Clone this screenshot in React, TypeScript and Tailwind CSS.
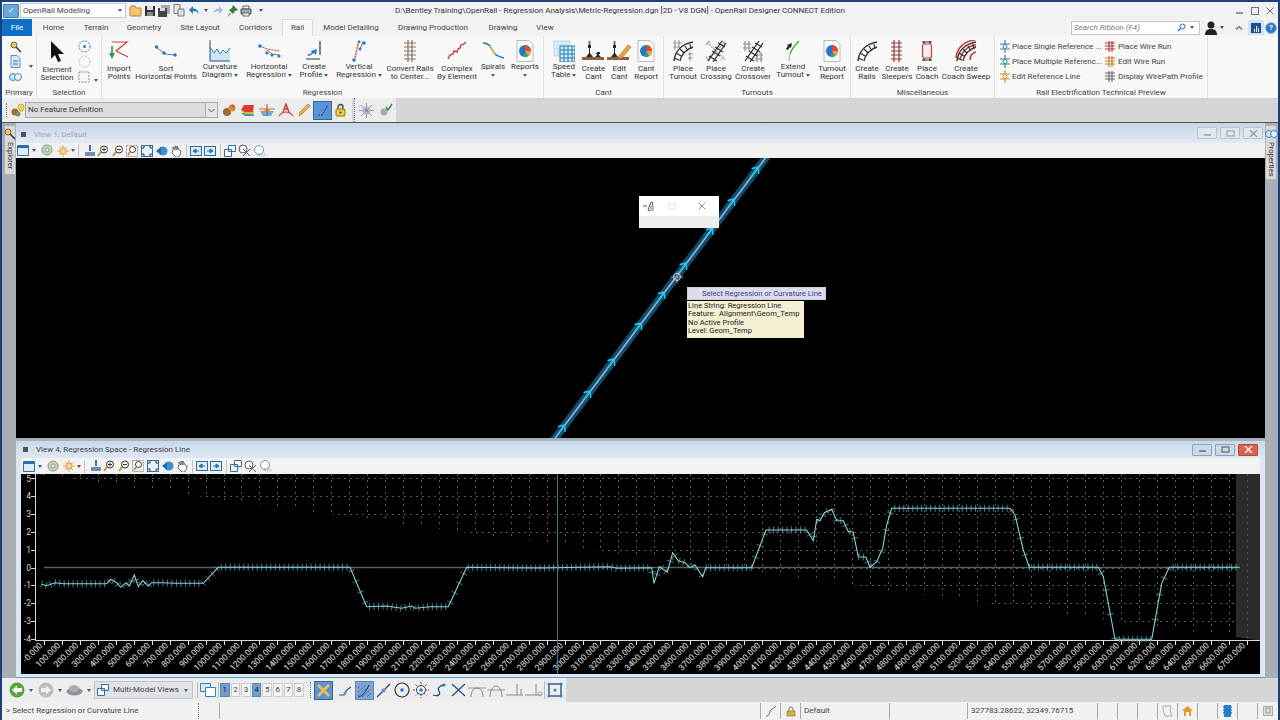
import type { ReactNode } from "react";

// small helpers for drawings
function Svg({ w = 22, h = 22, children }: { w?: number; h?: number; children: ReactNode }) {
  return (
    <svg width={w} height={h} viewBox={`0 0 ${w} ${h}`} fill="none" className="shrink-0">
      {children}
    </svg>
  );
}

function Tri() {
  return <span className="inline-block w-0 h-0 border-x-[2.5px] border-t-[3px] border-x-transparent border-t-[#555]" />;
}

function Report() {
  return (
    <Svg w={18} h={22}>
      <path d="M1 .5h12l4 4v17H1z" fill="#fafafa" stroke="#b9b9b9" />
      <circle cx="9" cy="11" r="6" fill="#1f78c8" />
      <path d="M9 11V5a6 6 0 0 1 6 6z" fill="#e0492c" />
      <path d="M9 11h6a6 6 0 0 1-3 5.2z" fill="#f2a12b" />
      <path d="M9 11l3 5.2a6 6 0 0 1-5 .4z" fill="#2f9d8f" />
    </Svg>
  );
}

function Cant({ pencil }: { pencil?: boolean }) {
  return (
    <Svg w={24} h={20}>
      <path d="M0 16h22v3H0z" fill="#8a6242" />
      <path d="M6 4h3v3H8v5l3 4H4l3-4V7H6z" fill="#2b2b2b" />
      <path d="M7.5 0v4" stroke="#2a7fc0" strokeWidth="2" />
      {!pencil && <path d="M15 11h3v2h-1v1l2 2h-6l2-2v-1h-1z" fill="#2b2b2b" />}
      {pencil && <path d="M12 15l9-11 3 2-9 11-4 1z" fill="#e8a33a" stroke="#8a6242" strokeWidth=".6" />}
    </Svg>
  );
}

function CurvedTrack({ hash, red }: { hash?: boolean; red?: boolean }) {
  const ties = ["M2 15l5 2", "M4 10l5 3", "M8 6l4 4", "M13 3l3 5", "M18 1l1 5"];
  return (
    <Svg>
      {hash && <path d="M1 3h9M1 7h6M3 0v10M7 0v8M16 14h5M16 18h5M18 12v9" stroke="#999" strokeWidth="1.2" />}
      {red && <path d="M1 18C2 8 9 1 20 0M5 20C7 11 12 6 21 5M15 20c0-4 2-7 6-8" stroke="#d2322a" strokeWidth="1.5" />}
      <path d="M2 21C3 11 10 4 21 2M8 21C9 15 14 9 21 7" stroke="#333" strokeWidth="1.4" />
      {ties.map((d) => (
        <path key={d} d={d} transform="translate(0 3)" stroke="#333" strokeWidth="1.2" />
      ))}
    </Svg>
  );
}

function Ladder({ gray }: { gray?: boolean }) {
  return (
    <Svg>
      {gray ? (
        <path d="M1 4h8M1 8h8M3 1v10M7 1v10M13 15h8M13 19h8M15 12v10M19 12v10" stroke="#8f8f8f" strokeWidth="1.2" />
      ) : (
        <path d="M2 2l18 18M20 2L2 20M5 1l-3 3M19 17l-3 3M1 5l3-3M17 1l4 4M1 17l4 4" stroke="#a9a9a9" strokeWidth="1.4" strokeDasharray="2 1" />
      )}
      <path d="M3 21L17 1M8 22L21 3M4 16l8 5M7 11l8 5M10 7l8 5M13 3l7 4" stroke="#333" strokeWidth="1.3" />
    </Svg>
  );
}

const bigIcons: Record<string, ReactNode> = {
  import: (
    <Svg w={20} h={21}>
      <path d="M3 2h15L7 11l12 6" stroke="#c8423c" strokeWidth="1.2" />
      <path d="M3 6v10" stroke="#2aa03c" strokeWidth="1.6" />
      <path d="M0 13l3 6 3-6z" fill="#2aa03c" />
    </Svg>
  ),
  sort: (
    <Svg w={24} h={12}>
      <path d="M2 2l9 7 10 1" stroke="#555" strokeWidth=".8" />
      <circle cx="2.5" cy="2" r="1.8" fill="#1f78c8" />
      <circle cx="10" cy="8" r="1.8" fill="#1f78c8" />
      <circle cx="21" cy="10" r="1.8" fill="#1f78c8" />
    </Svg>
  ),
  curve: (
    <Svg>
      <path d="M1 7l4 6 3-4 3 5 3-4 3 3 4-5v13H1z" fill="#cfe4f6" />
      <path d="M1 7l4 6 3-4 3 5 3-4 3 3 4-5" stroke="#2d8a96" strokeWidth="1" />
      <path d="M1 0v21h20" stroke="#2b4f80" strokeWidth="1" />
    </Svg>
  ),
  hreg: (
    <Svg w={23} h={14}>
      <path d="M2 2l7 3 6 1 6 1" stroke="#c9302c" strokeDasharray="2 1" />
      <path d="M9 6l5 4 7 1" stroke="#555" strokeWidth=".8" />
      <circle cx="2" cy="2" r="1.8" fill="#1f78c8" />
      <circle cx="9" cy="9" r="1.6" fill="#1f78c8" />
      <circle cx="14" cy="11" r="1.6" fill="#1f78c8" />
      <circle cx="21" cy="12" r="1.6" fill="#1f78c8" />
    </Svg>
  ),
  profile: (
    <Svg w={18} h={20}>
      <path d="M15 0v14" stroke="#333" strokeWidth="1.2" />
      <path d="M1 18h14" stroke="#333" />
      <path d="M2 14l5-2-1-2 6-2-1 6-2-2-5 3z" fill="#1f78c8" />
    </Svg>
  ),
  vreg: (
    <Svg w={14} h={22}>
      <path d="M6 4L3 18" stroke="#c9302c" strokeDasharray="2 1" strokeWidth="1.3" />
      <path d="M11 2L8 9" stroke="#444" strokeWidth=".8" />
      <circle cx="7" cy="2" r="1.4" fill="#1f78c8" />
      <circle cx="12" cy="3" r="1.8" fill="#1f78c8" />
      <circle cx="8" cy="9" r="1.5" fill="#1f78c8" />
      <circle cx="2" cy="20" r="1.8" fill="#1f78c8" />
    </Svg>
  ),
  convert: (
    <Svg w={14} h={22}>
      <path d="M5 0v22M9 0v22M1 3h12M1 7h12M1 11h12M1 15h12M1 19h12" stroke="#8b6f5e" strokeWidth="1.2" />
    </Svg>
  ),
  complex: (
    <Svg w={20} h={19}>
      <path d="M1 18l2-4 3-1 1-3 3 1 1-3 2-1 1-3 3-1 2-2" stroke="#c8423c" strokeWidth="1.4" />
    </Svg>
  ),
  spiral: (
    <Svg w={23} h={18}>
      <path d="M1 1c3 0 5 1 7 3" stroke="#1f78c8" strokeWidth="1.5" />
      <path d="M8 4c2 3 3 6 5 8" stroke="#e79a2e" strokeWidth="1.6" />
      <path d="M13 12c2 2 5 3 9 4" stroke="#1f78c8" strokeWidth="1.5" />
    </Svg>
  ),
  report: <Report />,
  speed: (
    <Svg>
      <path d="M1 1h16v15H1z" fill="#e3f0f8" stroke="#bcd6e6" />
      <path d="M5 1v15M9 1v15M13 1v15M1 5h16M1 9h16M1 13h16" stroke="#c5dcea" />
      <path d="M7 6h15v16H7z" fill="#d4e9f7" stroke="#1f7fb5" />
      <path d="M11 6v16M15 6v16M19 6v16M7 10h15M7 14h15M7 18h15" stroke="#1f7fb5" />
    </Svg>
  ),
  cant: <Cant />,
  ecant: <Cant pencil />,
  turnout: <CurvedTrack hash />,
  crossing: <Ladder />,
  crossover: <Ladder gray />,
  extend: (
    <Svg w={16} h={22}>
      <path d="M14 1C9 6 6 11 5 14" stroke="#49b03c" strokeWidth="1.4" />
      <path d="M5 14c-1 3-1 5-1 7" stroke="#bbb" strokeWidth="1.4" />
      <path d="M1 9l2-3-1-1 5-2-1 5-1-1-2 3z" fill="#222" />
    </Svg>
  ),
  rails: <CurvedTrack />,
  sleepers: (
    <Svg w={12} h={22}>
      <path d="M3 0v22M8 0v22" stroke="#c8423c" strokeWidth="1.4" />
      <path d="M0 3h11M0 7h11M0 11h11M0 15h11M0 19h11" stroke="#6a4a44" strokeWidth="1.1" />
    </Svg>
  ),
  coach: (
    <Svg w={12} h={22}>
      <path d="M3 1v3M9 1v3M3 18v3M9 18v3M1 2h10M1 20h10" stroke="#333" strokeWidth="1.2" />
      <rect x="1.5" y="4" width="9" height="14" rx="2" fill="#fbeeee" stroke="#c8423c" strokeWidth="1.2" />
    </Svg>
  ),
  sweep: <CurvedTrack red />,
};

function RibbonItem({ name, lines, width, drop }: { name: string; lines: string[]; width: string; drop?: boolean }) {
  return (
    <div className={`flex flex-col items-center ${width}`}>
      <div className="h-[25px] mt-[2px] flex items-center justify-center">{bigIcons[name]}</div>
      <div className={`text-center leading-[8px] whitespace-nowrap ${drop ? "" : "mt-[2px]"}`}>
        {lines.map((l, i) => (
          <div key={l}>
            {l}
            {drop && i === lines.length - 1 && lines.length > 1 && (
              <span className="ml-[2px] inline-block align-middle">
                <Tri />
              </span>
            )}
          </div>
        ))}
        {drop && lines.length === 1 && (
          <div className="flex justify-center pt-[3px]">
            <Tri />
          </div>
        )}
      </div>
    </div>
  );
}

function Group({ label, width, children }: { label: string; width: string; children: ReactNode }) {
  return (
    <div className={`${width} shrink-0 h-full flex flex-col border-r border-[#dfdfdf]`}>
      <div className="h-[52px] flex">{children}</div>
      <div className="h-[10px] leading-[10px] text-center text-[#444] whitespace-nowrap">{label}</div>
    </div>
  );
}

function Mini({ kind }: { kind: string }) {
  switch (kind) {
    case "tool":
      return (
        <Svg w={12} h={12}>
          <circle cx="4" cy="4" r="3" fill="#e8c66a" stroke="#7a6a30" />
          <path d="M6 6l5 5" stroke="#333" strokeWidth="1.5" />
        </Svg>
      );
    case "doc":
      return (
        <Svg w={11} h={13}>
          <path d="M1 .5h6l3 3v9H1z" fill="#d8e8f6" stroke="#5b8fc0" />
          <path d="M3 6h5M3 9h5" stroke="#2a6fb0" />
        </Svg>
      );
    case "ref":
      return (
        <Svg w={13} h={12}>
          <circle cx="4" cy="6" r="3.5" fill="#cfe4f6" stroke="#3a86c0" />
          <circle cx="9" cy="6" r="3.5" fill="#eaf3fb" stroke="#3a86c0" />
        </Svg>
      );
    case "dotcircle":
      return (
        <Svg w={13} h={13}>
          <circle cx="6.5" cy="6.5" r="5.5" stroke="#3a7fa5" strokeDasharray="2 1.2" />
          <circle cx="6.5" cy="6.5" r="1.5" fill="#3a7fa5" />
        </Svg>
      );
    case "dotgray":
      return (
        <Svg w={13} h={13}>
          <circle cx="6.5" cy="6.5" r="5.5" stroke="#bbb" strokeDasharray="2 1.2" />
        </Svg>
      );
    case "dotrect":
      return (
        <Svg w={12} h={12}>
          <rect x="1" y="1" width="10" height="10" stroke="#888" strokeDasharray="2 1.2" />
        </Svg>
      );
    case "folder":
      return (
        <Svg w={13} h={12}>
          <path d="M1 3l1-2h4l1 2h5v7a1 1 0 0 1-1 1H2a1 1 0 0 1-1-1z" fill="#f2c46d" stroke="#b8873a" />
        </Svg>
      );
    case "save":
      return (
        <Svg w={12} h={12}>
          <path d="M1 1h10v10H1z" fill="#333" />
          <path d="M3 1h6v4H3z" fill="#ddd" />
          <path d="M3 7h6v4H3z" fill="#888" />
        </Svg>
      );
    case "saveall":
      return (
        <Svg w={13} h={12}>
          <path d="M3 0h9v9H3z" fill="#aaa" />
          <path d="M0 3h9v9H0z" fill="#444" />
          <path d="M2 3h5v3H2z" fill="#ddd" />
        </Svg>
      );
    case "copy":
      return (
        <Svg w={12} h={13}>
          <path d="M1 .5h6v9H1z" fill="#eee" stroke="#777" />
          <path d="M5 5h6v7H5z" fill="#ddd" stroke="#777" />
        </Svg>
      );
    case "undo":
      return (
        <Svg w={10} h={9}>
          <path d="M0 4l4-4v2.5c3 0 5 1.5 6 5-2-2-4-2.5-6-2.5V8z" fill="#2279c5" />
        </Svg>
      );
    case "redo":
      return (
        <Svg w={10} h={9}>
          <path d="M10 4L6 0v2.5c-3 0-5 1.5-6 5 2-2 4-2.5 6-2.5V8z" fill="#9dbfe0" />
        </Svg>
      );
    case "pin":
      return (
        <Svg w={11} h={12}>
          <path d="M6 0l5 5-3 1-2 3-4-4 3-2zM3 8l-3 4 4-3z" fill="#3a7a3a" />
        </Svg>
      );
    case "print":
      return (
        <Svg w={12} h={12}>
          <path d="M3 1h6v3H3z" fill="#fff" stroke="#666" />
          <path d="M1 4h10v5H1z" fill="#9aa" stroke="#555" />
          <path d="M3 8h6v3H3z" fill="#fff" stroke="#666" />
        </Svg>
      );
    case "gem":
      return (
        <Svg w={14} h={14}>
          <circle cx="5" cy="9" r="4" fill="#9a6a3c" />
          <circle cx="10" cy="5" r="3.5" fill="#d08a3a" />
          <circle cx="11" cy="3" r="1.5" fill="#e2533a" />
        </Svg>
      );
    case "bulbs":
      return (
        <Svg w={15} h={14}>
          <circle cx="4" cy="9" r="3.5" fill="#a06a3c" />
          <circle cx="7" cy="11" r="2.5" fill="#7f8f5a" />
          <path d="M10 1a3 3 0 0 1 3 3c0 2-1 2-1 4h-3c0-2-2-2-2-4a3 3 0 0 1 3-3z" fill="#f2d64a" stroke="#a78b20" strokeWidth=".6" />
        </Svg>
      );
    case "layers":
      return (
        <Svg w={15} h={13}>
          <path d="M1 9l4 3h9l-1-3z" fill="#2c9fb0" />
          <path d="M1 7l4 3h8l1-2z" fill="#e3b23c" />
          <path d="M1 6l3-5h10l-1 7H5z" fill="#dd3b2f" />
        </Svg>
      );
    case "section":
      return (
        <Svg w={16} h={13}>
          <path d="M0 5h16" stroke="#d66a4a" />
          <path d="M1 7h14l-3 5H4z" fill="#6aaed6" />
          <path d="M6 5h4l2 3H4z" fill="#d6975a" />
          <path d="M8 0v12" stroke="#d33" />
        </Svg>
      );
    case "textA":
      return (
        <Svg w={16} h={14}>
          <path d="M5 9l3-8 3 8M6 6h4" stroke="#c4322a" strokeWidth="1.3" />
          <path d="M1 13c2-3 4-4 7-4s5 1 7 4" stroke="#c4322a" strokeWidth="1.2" />
        </Svg>
      );
    case "pencil":
      return (
        <Svg w={13} h={14}>
          <path d="M1 13l1-4 8-8 2 2-8 8z" fill="#eab04c" stroke="#a5702a" strokeWidth=".7" />
        </Svg>
      );
    case "lock":
      return (
        <Svg w={11} h={14}>
          <path d="M3 6V4a2.5 2.5 0 0 1 5 0v2" stroke="#444" strokeWidth="1.3" />
          <rect x="1" y="6" width="9" height="7" rx="1" fill="#f0cf3d" stroke="#8a7420" />
          <circle cx="5.5" cy="9.5" r="1" fill="#333" />
        </Svg>
      );
    case "gear":
      return (
        <Svg w={15} h={15}>
          <path d="M7.5 0v15M0 7.5h15M2 2l11 11M13 2L2 13" stroke="#9a9aaa" strokeWidth="1" />
          <circle cx="7.5" cy="7.5" r="4" fill="#b2b2c0" />
          <circle cx="7.5" cy="7.5" r="1.5" fill="#6f8fc0" />
        </Svg>
      );
    case "check":
      return (
        <Svg w={15} h={14}>
          <circle cx="5" cy="9" r="3.5" fill="#a9a9a9" />
          <path d="M7 4l2 3 4-6" stroke="#3a8a3a" strokeWidth="1.4" />
        </Svg>
      );
    case "view":
      return (
        <Svg w={12} h={11}>
          <path d="M.5.5h11v10H.5z" fill="#dcebf7" stroke="#2e6da4" />
          <path d="M1 1h10v2H1z" fill="#2e6da4" />
        </Svg>
      );
    case "disp":
      return (
        <Svg w={13} h={13}>
          <circle cx="6" cy="6" r="5" fill="#e2d68a" stroke="#5f9ac0" />
          <circle cx="6" cy="6" r="2" fill="#fff" stroke="#5f9ac0" />
        </Svg>
      );
    case "sun":
      return (
        <Svg w={12} h={12}>
          <path d="M6 0v12M0 6h12M2 2l8 8M10 2l-8 8" stroke="#eda65a" />
          <circle cx="6" cy="6" r="3" fill="#f7d9a0" stroke="#e59a4a" />
        </Svg>
      );
    case "brush":
      return (
        <Svg w={11} h={12}>
          <path d="M5 0h2v6H5z" fill="#3b6ea5" />
          <path d="M1 7h10v4H1z" fill="#6e8fb3" />
        </Svg>
      );
    case "zin":
    case "zout":
      return (
        <Svg w={12} h={12}>
          <path d="M4 7l-3 4" stroke="#d68a2a" strokeWidth="1.8" />
          <circle cx="7" cy="4.5" r="3.5" fill="#fff" stroke="#333" />
          <path d="M5 4.5h4" stroke="#333" />
          {kind === "zin" && <path d="M7 2.5v4" stroke="#333" />}
        </Svg>
      );
    case "zwin":
      return (
        <Svg w={12} h={12}>
          <rect x=".5" y=".5" width="11" height="11" stroke="#999" strokeDasharray="2 1" />
          <circle cx="6.5" cy="4.5" r="3" fill="#fff" stroke="#333" />
          <path d="M4 7l-2 3" stroke="#d68a2a" strokeWidth="1.6" />
        </Svg>
      );
    case "fit":
      return (
        <Svg w={12} h={12}>
          <rect x=".5" y=".5" width="11" height="11" fill="#e8f2fa" stroke="#2e6da4" />
          <path d="M2 2h2M2 2v2M10 2H8M10 2v2M2 10h2M2 10V8M10 10H8M10 10V8" stroke="#333" />
        </Svg>
      );
    case "rot":
      return (
        <Svg w={12} h={12}>
          <circle cx="7" cy="6" r="4.5" fill="#3f8fd0" />
          <path d="M0 6l5-4v8z" fill="#1f6bb0" />
        </Svg>
      );
    case "hand":
      return (
        <Svg w={12} h={12}>
          <path d="M3 5V2l2 3V1l2 4V1l2 4 2 1-1 4-2 2H6L2 8z" fill="#fff" stroke="#444" strokeWidth=".8" />
        </Svg>
      );
    case "left":
    case "right":
      return (
        <Svg w={12} h={10}>
          <rect x=".5" y=".5" width="11" height="9" fill="#dcebf7" stroke="#2e6da4" />
          <path d={kind === "left" ? "M3 5l3-2v4zM6 5h3" : "M9 5L6 3v4zM6 5H3"} fill="#2e6da4" stroke="#2e6da4" />
        </Svg>
      );
    case "win2":
      return (
        <Svg w={12} h={12}>
          <path d="M4.5.5h7v6h-7zM.5 4.5h7v7h-7z" fill="#fff" stroke="#2e6da4" />
        </Svg>
      );
    case "dx":
      return (
        <Svg w={13} h={13}>
          <circle cx="5" cy="5" r="4" fill="#fff" stroke="#556" />
          <path d="M5 5l7 7M12 5l-7 7" stroke="#556" />
        </Svg>
      );
    case "bub":
      return (
        <Svg w={13} h={12}>
          <circle cx="6" cy="5" r="4.5" fill="#fff" stroke="#5f9ac0" />
          <path d="M5 9h7v2H5z" stroke="#aaa" strokeDasharray="1 1" />
        </Svg>
      );
    default:
      return null;
  }
}

function RefIcon({ color = "#3a86a5" }: { color?: string }) {
  return (
    <Svg w={12} h={13}>
      <path d="M6 0v13M1 4h10M1 9h10" stroke={color} strokeWidth="1.2" />
      <circle cx="6" cy="6.5" r="2" fill="#fff" stroke={color} />
    </Svg>
  );
}

function WireIcon({ color = "#a33" }: { color?: string }) {
  return (
    <Svg w={12} h={11}>
      <path d="M1 2h10M1 5h10M1 8h10M5 0v11M8 0v11" stroke={color} strokeWidth="1.1" />
    </Svg>
  );
}

function ViewToolbar({ inset }: { inset: string }) {
  const first = ["zin", "zout", "zwin", "fit", "rot", "hand"];
  return (
    <div className={`flex items-center h-full ${inset}`}>
      <Mini kind="view" />
      <span className="ml-[3px] mr-[4px] flex"><Tri /></span>
      <div className="w-[15px] flex justify-center"><Mini kind="disp" /></div>
      <div className="w-[15px] flex justify-center"><Mini kind="sun" /></div>
      <span className="ml-[1px] flex"><Tri /></span>
      <div className="w-px h-[13px] bg-[#c4c4c4] mx-[3px]" />
      <div className="w-[14px] flex justify-center"><Mini kind="brush" /></div>
      {first.map((k) => (
        <div key={k} className="w-[14.6px] flex justify-center"><Mini kind={k} /></div>
      ))}
      <div className="w-px h-[13px] bg-[#c4c4c4] mx-[2px]" />
      <div className="w-[14.5px] flex justify-center"><Mini kind="left" /></div>
      <div className="w-[14.5px] flex justify-center"><Mini kind="right" /></div>
      <div className="w-px h-[13px] bg-[#c4c4c4] mx-[2px]" />
      <div className="w-[14.6px] flex justify-center"><Mini kind="win2" /></div>
      <div className="w-[14.6px] flex justify-center"><Mini kind="dx" /></div>
      <div className="w-[14.6px] flex justify-center"><Mini kind="bub" /></div>
    </div>
  );
}

// upper view: the picked regression line with its direction arrows
const arrowsAt = [172, 204, 233, 268, 297, 328, 364, 396, 430];

function PlanView() {
  return (
    <svg viewBox="16 158 1249 280" className="w-[1249px] h-[280px] block bg-black">
      <path d="M553 441L767 156" stroke="#0f5068" strokeWidth="8" />
      <path d="M553 441L767 156" stroke="#a7b4f0" strokeWidth="1.5" />
      {arrowsAt.map((y) => {
        const x = 555 + (438 - y) * 0.75;
        return (
          <g key={y} transform={`translate(${x} ${y}) rotate(37)`}>
            <path d="M0 -5V6M-4.5 -1L0 -6L4.5 -1" stroke="#2bc4ee" strokeWidth="1.4" fill="none" />
          </g>
        );
      })}
      <path d="M677 268v18M669 277h16" stroke="#111" strokeWidth="1.2" />
      <circle cx="677" cy="277" r="3.5" stroke="#ccc" fill="none" />
      <path d="M677 271v12M671 277h12" stroke="#ccc" strokeWidth=".8" />
    </svg>
  );
}

// regression chart, coordinates taken straight from the screen
const yTicks = [5, 4, 3, 2, 1, 0, -1, -2, -3, -4];
const yOf = (v: number) => 567.5 - 17.95 * v;
const xOf = (i: number) => 44 + 17.95 * i;
const snap = (n: number) => Math.round(n) + 0.5;
const stations = Array.from({ length: 68 }, (_, i) => i);

const curve: number[][] = [
  [41.7, 584.3], [46.7, 585.7], [55, 582.7], [63.3, 583.7], [106.7, 583.7], [110.7, 579.3], [116.7, 582.7], [120.7, 587.3],
  [126, 582.7], [129.3, 586], [134.3, 575], [138.3, 586.7], [142.7, 580.7], [148.3, 586], [151.7, 582.7], [163.3, 582.7],
  [173.3, 583.3], [203.3, 583.3], [218.3, 567.3], [350, 567.3], [366.7, 606.7], [386.7, 606], [401.7, 608.3], [411.7, 606],
  [415, 608.3], [430, 606.7], [448.3, 606.7], [466.7, 567.3], [540, 568], [610, 566.7], [616.7, 568.3], [651.7, 567.7],
  [654, 583.3], [659.3, 566.7], [667.3, 572], [672.7, 552.7], [678.3, 560.7], [685, 562.7], [690, 567.7], [695, 565],
  [702.7, 576.7], [705.7, 567.7], [751.7, 567.7], [766, 530], [806.7, 530], [813.3, 540.7], [816.7, 519.3], [820, 520.7],
  [824.3, 512.7], [831.7, 509.3], [836.7, 520.7], [843.3, 520.7], [848.3, 531.7], [853, 531.7], [858.3, 556.7], [866, 557.3],
  [870, 567.3], [876.7, 561.7], [882.7, 548.3], [886.7, 525], [891.7, 508.3], [1010, 508.3], [1015, 515], [1023.3, 550],
  [1029.3, 567.3], [1098.3, 567.3], [1103.3, 576.7], [1115, 639.3], [1151.7, 639.3], [1161.7, 583.3], [1169.3, 567.3], [1239.3, 567.3],
];

// stations sit at an even step along x, so slopes carry fewer ticks
function buildTicks() {
  let d = "";
  let i = 1;
  for (let x = curve[0][0]; x < 1239; x += 4.49) {
    while (curve[i][0] < x) i++;
    const [x0, y0] = curve[i - 1];
    const [x1, y1] = curve[i];
    const len = Math.hypot(x1 - x0, y1 - y0);
    const nx = -(y1 - y0) / len;
    const ny = (x1 - x0) / len;
    const y = y0 + ((y1 - y0) * (x - x0)) / (x1 - x0);
    d += `M${(x - nx * 3.5).toFixed(1)} ${(y - ny * 3.5).toFixed(1)}L${(x + nx * 3.5).toFixed(1)} ${(y + ny * 3.5).toFixed(1)}`;
  }
  return d;
}

const tickPath = buildTicks();
const curvePoints = curve.map((p) => p.join(",")).join(" ");

function RegressionChart() {
  return (
    <svg viewBox="21 474 1239 200" className="w-[1239px] h-[200px] block bg-black">
      <rect x="36" y="474" width="8" height="166" fill="#2b2b2b" />
      <rect x="1236" y="474" width="24" height="166" fill="#2b2b2b" />
      {yTicks.map((v) => (
        <g key={v}>
          <path d={`M44 ${snap(yOf(v))}H1236`} stroke="#585858" strokeDasharray="2 4" />
          <path d={`M31 ${snap(yOf(v))}H36`} stroke="#d5d5d5" />
          <text x="31" y={Math.max(yOf(v) + 3, 482)} textAnchor="end" className="text-[8.5px] fill-[#d5d5d5]">
            {v}
          </text>
        </g>
      ))}
      {stations.map((i) => (
        <g key={i}>
          <path d={`M${snap(xOf(i))} 474V640`} stroke="#585858" strokeDasharray="2 4" />
          <path d={`M${snap(xOf(i))} 640V645`} stroke="#e5e5e5" />
          <text
            textAnchor="end"
            transform={`translate(${xOf(i) - 1} 646) rotate(-45)`}
            className="text-[8.5px] fill-[#e0e0e0]"
          >
            {i === 0 ? "-0.000" : `${i * 100}.000`}
          </text>
        </g>
      ))}
      <path d="M35.5 474V640.5H1260" stroke="#d9d9d9" />
      <path d="M44 567.5H1240" stroke="#5e5e5e" strokeWidth="1.4" />
      <path d={tickPath} stroke="#4d8d95" strokeWidth=".9" />
      <polyline points={curvePoints} fill="none" stroke="#88d2d9" strokeWidth="1.1" />
      <path d="M557.5 474V674" stroke="#3f7a96" />
    </svg>
  );
}

function WinBtn({ kind, dim }: { kind: "min" | "max" | "close"; dim?: boolean }) {
  const red = kind === "close" && !dim;
  return (
    <div
      className={`w-[20px] h-[12px] flex items-center justify-center rounded-[1px] border ${
        red ? "bg-[#d9634e] border-[#b04a3a]" : dim ? "bg-[#dfe6ee] border-[#b7c2cf]" : "bg-[#cbd8e6] border-[#8ea3ba]"
      }`}
    >
      <svg width="9" height="7" viewBox="0 0 9 7" fill="none">
        {kind === "min" && <path d="M1 5h7" stroke={dim ? "#999" : "#667"} strokeWidth="1.5" />}
        {kind === "max" && <rect x="1" y="1" width="7" height="5" stroke={dim ? "#999" : "#556"} />}
        {kind === "close" && <path d="M1 0l7 7M8 0L1 7" stroke={dim ? "#999" : "#fff"} strokeWidth="1.3" />}
      </svg>
    </div>
  );
}

function Cell({ className, children }: { className: string; children?: ReactNode }) {
  return <div className={`h-[16px] shrink-0 border-l border-[#a8a8a8] flex items-center ${className}`}>{children}</div>;
}

const regressionItems = [
  { name: "import", lines: ["Import", "Points"], width: "w-[34px]" },
  { name: "sort", lines: ["Sort", "Horizontal Points"], width: "w-[60px]" },
  { name: "curve", lines: ["Curvature", "Diagram"], width: "w-[48px]", drop: true },
  { name: "hreg", lines: ["Horizontal", "Regression"], width: "w-[50px]", drop: true },
  { name: "profile", lines: ["Create", "Profile"], width: "w-[40px]", drop: true },
  { name: "vreg", lines: ["Vertical", "Regression"], width: "w-[50px]", drop: true },
  { name: "convert", lines: ["Convert Rails", "to Center..."], width: "w-[52px]" },
  { name: "complex", lines: ["Complex", "By Element"], width: "w-[42px]" },
  { name: "spiral", lines: ["Spirals"], width: "w-[30px]", drop: true },
  { name: "report", lines: ["Reports"], width: "w-[34px]", drop: true },
];
const cantItems = [
  { name: "speed", lines: ["Speed", "Table"], width: "w-[28px]", drop: true },
  { name: "cant", lines: ["Create", "Cant"], width: "w-[32px]" },
  { name: "ecant", lines: ["Edit", "Cant"], width: "w-[20px]" },
  { name: "report", lines: ["Cant", "Report"], width: "w-[34px]" },
];
const turnoutItems = [
  { name: "turnout", lines: ["Place", "Turnout"], width: "w-[30px]" },
  { name: "crossing", lines: ["Place", "Crossing"], width: "w-[36px]" },
  { name: "crossover", lines: ["Create", "Crossover"], width: "w-[38px]" },
  { name: "extend", lines: ["Extend", "Turnout"], width: "w-[42px]", drop: true },
  { name: "report", lines: ["Turnout", "Report"], width: "w-[36px]" },
];
const miscItems = [
  { name: "rails", lines: ["Create", "Rails"], width: "w-[28px]" },
  { name: "sleepers", lines: ["Create", "Sleepers"], width: "w-[32px]" },
  { name: "coach", lines: ["Place", "Coach"], width: "w-[28px]" },
  { name: "sweep", lines: ["Create", "Coach Sweep"], width: "w-[50px]" },
];
const tabs = [
  { t: "Home", w: "w-[43px]" },
  { t: "Terrain", w: "w-[42px]" },
  { t: "Geometry", w: "w-[54px]" },
  { t: "Site Layout", w: "w-[58px]" },
  { t: "Corridors", w: "w-[53px]" },
  { t: "Rail", w: "w-[31px]", on: true },
  { t: "Model Detailing", w: "w-[76px]" },
  { t: "Drawing Production", w: "w-[88px]" },
  { t: "Drawing", w: "w-[52px]" },
  { t: "View", w: "w-[32px]" },
];

export default function App() {
  return (
    <div className="w-[1280px] h-[720px] overflow-hidden relative flex flex-col border-x-2 border-t-2 border-[#1c4079] bg-[#f0f0f0] text-[8px] text-[#333] font-['Roboto',sans-serif]">
      {/* title bar */}
      <div className="h-[17px] shrink-0 flex items-center bg-[#f2f2f2] relative">
        <div className="w-[16px] h-[14px] ml-[1px] mr-px bg-[#6aa8d8] border border-[#3d7fb5] rounded-[1px] flex items-center justify-center text-white">✓</div>
        <div className="w-[106px] h-[15px] bg-white border border-[#c9c9c9] flex items-center justify-between pl-[2px] pr-[3px] text-[#444]">
          OpenRail Modeling <Tri />
        </div>
        <div className="flex items-center ml-[2px]">
          {["folder", "save", "saveall", "copy"].map((k) => (
            <div key={k} className="w-[14.5px] flex justify-center"><Mini kind={k} /></div>
          ))}
          <div className="w-[15px] flex justify-center"><Mini kind="undo" /></div>
          <div className="w-[9px] flex justify-center"><Tri /></div>
          <div className="w-[15px] flex justify-center"><Mini kind="redo" /></div>
          <div className="w-[14px] flex justify-center"><Mini kind="pin" /></div>
          <div className="w-[14px] flex justify-center"><Mini kind="print" /></div>
          <div className="w-[15px] flex justify-center"><Tri /></div>
        </div>
        <div className="absolute left-[392px] w-[452px] text-center whitespace-nowrap text-[#333]">
          D:\Bentley Training\OpenRail - Regression Analysis\Metric-Regression.dgn [2D - V8 DGN] - OpenRail Designer CONNECT Edition
        </div>
        <div className="ml-auto flex items-center gap-[5px] pr-[3px]">
          <svg width="10" height="10" viewBox="0 0 10 10" fill="none"><path d="M1 7h7" stroke="#777" strokeWidth="1.5" /></svg>
          <svg width="10" height="10" viewBox="0 0 10 10" fill="none"><rect x="1.5" y="1.5" width="7" height="7" stroke="#777" /></svg>
          <svg width="10" height="10" viewBox="0 0 10 10" fill="none"><path d="M1.5 1.5l7 7M8.5 1.5l-7 7" stroke="#777" /></svg>
        </div>
      </div>

      {/* tabs */}
      <div className="h-[17px] shrink-0 flex items-stretch bg-[#f2f2f2] text-[#444]">
        <div className="w-[30px] bg-[#0f6fc6] text-white flex items-center justify-center">File</div>
        {tabs.map((t) => (
          <div
            key={t.t}
            className={`${t.w} flex items-center justify-center whitespace-nowrap ${
              t.on ? "bg-[#f9f9f9] border-x border-t border-[#dadada]" : ""
            }`}
          >
            {t.t}
          </div>
        ))}
        <div className="ml-auto flex items-center pr-[1px]">
          <div className="w-[129px] h-[14px] bg-white border border-[#c4c4c4] flex items-center pl-[2px] pr-[5px] italic text-[#777]">
            Search Ribbon (F4)
            <span className="ml-auto not-italic flex items-center gap-[4px]">
              <svg width="9" height="9" viewBox="0 0 9 9" fill="none"><circle cx="5.5" cy="3.5" r="2.5" stroke="#1f6bb0" /><path d="M3.5 5.5L1 8" stroke="#1f6bb0" strokeWidth="1.3" /></svg>
              <Tri />
            </span>
          </div>
          <svg className="ml-[4px]" width="14" height="14" viewBox="0 0 14 14"><circle cx="7" cy="4" r="3.5" fill="#222" /><path d="M1 14c0-4 2-6 6-6s6 2 6 6z" fill="#222" /></svg>
          <span className="ml-[2px] flex"><Tri /></span>
          <svg className="ml-[11px]" width="8" height="6" viewBox="0 0 8 6" fill="none"><path d="M1 4.5L4 1.5l3 3" stroke="#666" strokeWidth="1.2" /></svg>
          <div className="ml-[5px] w-[16px] h-[15px] bg-[#cfe2f3] flex items-center justify-center">
            <div className="w-[10px] h-[10px] bg-[#1d4f8c] text-white flex items-end justify-center gap-px pb-px">
              <span className="w-px h-[3px] bg-white" /><span className="w-px h-[6px] bg-white" /><span className="w-px h-[4px] bg-white" />
            </div>
          </div>
          <div className="ml-[1px] w-[12px] h-[12px] rounded-full bg-[#2a78c4] border border-[#9cc3e6] text-white flex items-center justify-center font-bold">?</div>
        </div>
      </div>

      {/* ribbon */}
      <div className="h-[62px] shrink-0 flex bg-[#f8f8f8]">
        <Group label="Primary" width="w-[35px]">
          <div className="flex flex-col items-center w-[26px] pl-[1px] pt-[4px] gap-[2px]">
            <div className="h-[13px] flex items-center"><Mini kind="tool" /></div>
            <div className="h-[13px] flex items-center"><Mini kind="doc" /></div>
            <div className="h-[13px] flex items-center"><Mini kind="ref" /></div>
          </div>
          <div className="pt-[24px] pl-[1px]"><Tri /></div>
        </Group>
        <Group label="Selection" width="w-[65px]">
          <div className="w-[40px] flex flex-col items-center pt-[4px]">
            <div className="h-[23px] flex items-center">
              <svg width="14" height="21" viewBox="0 0 14 21"><path d="M1 0v18l4-4 3 7 3-1-3-7h6z" fill="#111" /></svg>
            </div>
            <div className="text-center leading-[8px] mt-[2px] pt-[1px]">Element<div>Selection</div></div>
          </div>
          <div className="flex flex-col items-center w-[14px] pt-[4px] gap-[2px]">
            <div className="h-[13px] flex items-center"><Mini kind="dotcircle" /></div>
            <div className="h-[13px] flex items-center"><Mini kind="dotgray" /></div>
            <div className="h-[13px] flex items-center"><Mini kind="dotrect" /></div>
          </div>
          <div className="pt-[38px] pl-[3px]"><Tri /></div>
        </Group>
        <Group label="Regression" width="w-[442px]">
          {regressionItems.map((it) => <RibbonItem key={it.name} {...it} />)}
        </Group>
        <Group label="Cant" width="w-[120px]">
          <div className="w-[6px]" />
          {cantItems.map((it) => <RibbonItem key={it.name} {...it} />)}
        </Group>
        <Group label="Turnouts" width="w-[187px]">
          <div className="w-[4px]" />
          {turnoutItems.map((it) => <RibbonItem key={it.name} {...it} />)}
        </Group>
        <Group label="Miscellaneous" width="w-[144px]">
          <div className="w-[2px]" />
          {miscItems.map((it) => <RibbonItem key={it.name} {...it} />)}
        </Group>
        <Group label="Rail Electrification Technical Preview" width="w-[213px]">
          <div className="grid grid-cols-[105px_1fr] auto-rows-[15px] pl-[4px] pt-[3px] whitespace-nowrap text-[#444] w-full">
            <div className="flex items-center gap-[1px]"><RefIcon />Place Single Reference ...</div>
            <div className="flex items-center gap-[2px]"><WireIcon />Place Wire Run</div>
            <div className="flex items-center gap-[1px]"><RefIcon color="#2d8a7a" />Place Multiple Referenc...</div>
            <div className="flex items-center gap-[2px]"><WireIcon color="#c9781f" />Edit Wire Run</div>
            <div className="flex items-center gap-[1px]"><RefIcon color="#c9941f" />Edit Reference Line</div>
            <div className="flex items-center gap-[2px]"><WireIcon color="#666" />Display WirePath Profile</div>
          </div>
        </Group>
      </div>

      {/* feature toolbar */}
      <div className="h-[24px] shrink-0 flex items-center bg-[#d5d5d5]">
        <div className="h-full w-[350px] bg-[#ececec] flex items-center">
          <div className="w-[5px] h-[14px] ml-[4px] border-l border-dotted border-[#777]" />
          <div className="w-[14px] flex justify-center"><Mini kind="bulbs" /></div>
          <div className="w-[193px] h-[16px] bg-[#dcdcdc] border border-[#aaa] flex items-center justify-between pl-[2px] text-[#333]">
            No Feature Definition
            <div className="w-[12px] h-full border-l border-[#aaa] bg-[#e6e6e6] flex items-center justify-center">
              <svg width="7" height="5" viewBox="0 0 7 5" fill="none"><path d="M.5 1l3 3 3-3" stroke="#555" /></svg>
            </div>
          </div>
          <div className="w-[19px] flex justify-center ml-[1px]"><Mini kind="gem" /></div>
          <div className="w-[19px] flex justify-center"><Mini kind="layers" /></div>
          <div className="w-[19px] flex justify-center"><Mini kind="section" /></div>
          <div className="w-[19px] flex justify-center"><Mini kind="textA" /></div>
          <div className="w-[18px] flex justify-center"><Mini kind="pencil" /></div>
          <div className="w-[19px] h-[19px] bg-[#5b94d6] border border-[#2e6da4] flex items-center justify-center">
            <svg width="12" height="12" viewBox="0 0 12 12" fill="none"><path d="M1 11h4l5-8V1" stroke="#123a6a" strokeDasharray="2 1" /></svg>
          </div>
          <div className="w-[17px] flex justify-center"><Mini kind="lock" /></div>
        </div>
        <div className="h-full w-[42px] ml-[2px] bg-[#ececec] flex items-center pl-[4px] gap-[5px] border-l border-dotted border-[#777]">
          <Mini kind="gear" />
          <Mini kind="check" />
        </div>
      </div>

      {/* workspace */}
      <div className="h-[556px] shrink-0 flex bg-[#a9aeb4]">
        <div className="w-[14px] shrink-0 border-t border-[#555]">
          <div className="mt-[2px] ml-[2px] w-[12px] h-[50px] bg-[#d9d9d9] flex flex-col items-center pt-[2px] border border-[#b0b0b0]">
            <Mini kind="tool" />
            <span className="[writing-mode:vertical-rl] mt-[2px] text-[#333] text-[7.5px]">Explorer</span>
          </div>
        </div>
        <div className="w-[1249px] shrink-0 flex flex-col">
          {/* view 1 */}
          <div className="h-[316px] shrink-0 border-t border-[#555]">
            <div className="h-[20px] bg-gradient-to-b from-[#c6d5e8] to-[#e2eaf3] flex items-center pl-[4px] pr-[2px] pt-[3px] gap-[3px]">
              <div className="w-[5px] h-[5px] bg-[#555] ml-[1px] mr-[5px]" />
              <span className="text-[#a8a8a8]">View 1, Default</span>
              <div className="ml-auto flex gap-[3px] -mt-[3px]">
                <WinBtn kind="min" dim />
                <WinBtn kind="max" dim />
                <WinBtn kind="close" dim />
              </div>
            </div>
            <div className="h-[15px] bg-[#f1f1f1]">
              <ViewToolbar inset="pl-[1px]" />
            </div>
            <PlanView />
          </div>
          <div className="h-[2px] shrink-0" />
          {/* view 4 */}
          <div className="h-[238px] shrink-0 bg-[#dce7f1] border-t border-[#9fb4c9] border-b border-b-[#5f9cc0] px-[5px]">
            <div className="h-[17px] -mx-[5px] px-[6px] bg-gradient-to-b from-[#c8d8ea] to-[#dde8f2] flex items-center gap-[3px]">
              <div className="w-[5px] h-[5px] bg-[#555] mr-[5px] ml-[1px]" />
              <span className="text-[#444]">View 4, Regression Space - Regression Line</span>
              <div className="ml-auto flex gap-[3px] pr-px">
                <WinBtn kind="min" />
                <WinBtn kind="max" />
                <WinBtn kind="close" />
              </div>
            </div>
            <div className="h-[16px] bg-[#f3f3f3]">
              <ViewToolbar inset="pl-[2px]" />
            </div>
            <RegressionChart />
          </div>
        </div>
        <div className="w-[13px] shrink-0 border-t border-[#555]">
          <div className="mt-[2px] w-[12px] h-[55px] bg-[#d9d9d9] flex flex-col items-center pt-[2px] border border-[#b0b0b0]">
            <Mini kind="ref" />
            <span className="[writing-mode:vertical-rl] mt-[2px] text-[#333] text-[7.5px]">Properties</span>
          </div>
        </div>
      </div>

      {/* bottom toolbar */}
      <div className="h-[24px] shrink-0 flex items-center bg-[#d6d6d6]">
        <div className="h-full w-[564px] flex items-center bg-[#ededed] pl-[7px]">
          <svg width="16" height="16" viewBox="0 0 16 16"><circle cx="8" cy="8" r="7.5" fill="#58a63a" /><path d="M3 8l5-4.5V6h5v4H8v2.5z" fill="#fff" /></svg>
          <div className="w-[12px] flex justify-center"><Tri /></div>
          <svg className="ml-px" width="16" height="16" viewBox="0 0 16 16"><circle cx="8" cy="8" r="7.5" fill="#bdbdbd" /><path d="M13 8L8 3.5V6H3v4h5v2.5z" fill="#eee" /></svg>
          <div className="w-[11px] flex justify-center"><Tri /></div>
          <svg className="ml-[1px]" width="17" height="12" viewBox="0 0 17 12"><ellipse cx="8.5" cy="7.5" rx="8" ry="4" fill="#8f9297" /><ellipse cx="8" cy="4.5" rx="5" ry="3.5" fill="#a9acb1" /></svg>
          <div className="w-[11px] flex justify-center"><Tri /></div>
          <div className="w-[99px] h-[18px] bg-[#dfe3e8] border border-[#bfc5cc] flex items-center pl-[2px] gap-[4px] whitespace-nowrap text-[#444]">
            <Mini kind="win2" />
            Multi-Model Views
            <span className="ml-auto pr-[4px] flex"><Tri /></span>
          </div>
          <div className="w-px h-[16px] bg-[#bbb] ml-[4px]" />
          <div className="w-[20px] flex justify-center">
            <svg width="16" height="14" viewBox="0 0 16 14" fill="none"><path d="M.5.5h10v8H.5z" fill="#dcebf7" stroke="#2e86b8" /><path d="M5.5 4.5h10v9h-10z" fill="#fff" stroke="#2e86b8" /></svg>
          </div>
          <div className="w-px h-[16px] bg-[#bbb] mr-[1px]" />
          <div className="flex gap-px text-[#444]">
            {[1, 2, 3, 4, 5, 6, 7, 8].map((n) => (
              <div
                key={n}
                className={`w-[9.6px] h-[14px] flex items-center justify-center border ${
                  n === 1 || n === 4 ? "bg-[#6f9fd0] border-[#5b88b8] text-[#123]" : "bg-[#f5f5f5] border-[#ccc]"
                }`}
              >
                {n}
              </div>
            ))}
          </div>
          <div className="w-px h-[16px] border-l border-dotted border-[#777] ml-[6px] mr-[3px]" />
          <div className="w-[19px] h-[19px] bg-[#5b94d6] border border-[#2e6da4] flex items-center justify-center">
            <svg width="13" height="13" viewBox="0 0 13 13" fill="none"><path d="M1 1l11 11M12 1L1 12" stroke="#f5c04a" strokeWidth="2.5" /></svg>
          </div>
          <div className="w-[3px]" />
          <div className="w-[19px] flex justify-center">
            <svg width="15" height="11" viewBox="0 0 15 11" fill="none"><path d="M1 10h5c2-1 1-4 3-5l4-3" stroke="#1d4f8c" strokeWidth="1.2" /><circle cx="7" cy="8" r="1.5" fill="#5b94d6" /></svg>
          </div>
          <div className="w-[19px] h-[19px] bg-[#7fa6d6] border border-[#5b88b8] flex items-center justify-center">
            <svg width="15" height="15" viewBox="0 0 15 15" fill="none"><path d="M1 13L13 2M1 9L9 2M5 14L14 6M1 5L5 1M10 14l4-4" stroke="#2a4f80" strokeDasharray="1 1" /><path d="M1 14c5-1 8-5 11-12" stroke="#123a6a" /></svg>
          </div>
          <div className="w-[19px] flex justify-center">
            <svg width="15" height="15" viewBox="0 0 15 15" fill="none"><path d="M1 14L14 1" stroke="#1d4f8c" strokeWidth="1.2" /><circle cx="7.5" cy="7.5" r="2" fill="#5b94d6" /></svg>
          </div>
          <div className="w-[19px] flex justify-center">
            <svg width="16" height="16" viewBox="0 0 16 16" fill="none"><circle cx="8" cy="8" r="7" stroke="#333" strokeWidth="1.2" /><circle cx="8" cy="8" r="1.8" fill="#2a78c4" /></svg>
          </div>
          <div className="w-[19px] flex justify-center">
            <svg width="16" height="16" viewBox="0 0 16 16" fill="none"><path d="M8 0v16M0 8h16M2.5 2.5l11 11M13.5 2.5l-11 11" stroke="#555" strokeDasharray="2 1" /><circle cx="8" cy="8" r="4.5" fill="#f5f5f5" stroke="#444" /><circle cx="8" cy="8" r="1.8" fill="#2a78c4" /></svg>
          </div>
          <div className="w-[18px] flex justify-center">
            <svg width="15" height="14" viewBox="0 0 15 14" fill="none"><path d="M1 12c5 2 8-1 6-4S8 2 13 2" stroke="#1d4f8c" strokeWidth="1.3" /><circle cx="12" cy="2" r="1.5" fill="#2a78c4" /></svg>
          </div>
          <div className="w-[19px] flex justify-center">
            <svg width="15" height="14" viewBox="0 0 15 14" fill="none"><path d="M1 1l13 12M14 1L1 13" stroke="#1d4f8c" strokeWidth="1.2" /></svg>
          </div>
          <div className="w-[19px] flex justify-center">
            <svg width="18" height="13" viewBox="0 0 18 13" fill="none"><path d="M0 4h18" stroke="#999" /><path d="M3 13C3 7 6 4 9 4s6 3 6 9" stroke="#888" /></svg>
          </div>
          <div className="w-[19px] flex justify-center">
            <svg width="18" height="13" viewBox="0 0 18 13" fill="none"><path d="M0 6h18" stroke="#999" /><path d="M3 13C3 6 6 2 9 2s6 4 6 11" stroke="#888" /></svg>
          </div>
          <div className="w-[19px] flex justify-center">
            <svg width="18" height="14" viewBox="0 0 18 14" fill="none"><path d="M0 12h17M11 1v11M15 6v6" stroke="#888" /></svg>
          </div>
          <div className="w-[19px] flex justify-center">
            <svg width="18" height="14" viewBox="0 0 18 14" fill="none"><path d="M0 12h17M11 1v11" stroke="#888" /><circle cx="15" cy="11" r="2" stroke="#aaa" /></svg>
          </div>
          <div className="w-px h-[18px] bg-[#bbb]" />
          <div className="w-[21px] flex justify-center">
            <svg width="16" height="16" viewBox="0 0 16 16" fill="none"><rect x="2" y="2" width="12" height="12" stroke="#123a6a" strokeWidth="1.2" /><circle cx="2" cy="2" r="1.5" fill="#2a86d0" /><circle cx="14" cy="2" r="1.5" fill="#2a86d0" /><circle cx="2" cy="14" r="1.5" fill="#2a86d0" /><circle cx="14" cy="14" r="1.5" fill="#2a86d0" /><circle cx="8" cy="8" r="1.5" fill="#2a86d0" /></svg>
          </div>
        </div>
      </div>

      {/* status bar */}
      <div className="h-[18px] shrink-0 flex items-center bg-[#f1f1f1] text-[#444] whitespace-nowrap">
        <div className="w-[196px] shrink-0 pl-[4px]">&gt; Select Regression or Curvature Line</div>
        <div className="w-[21px] h-[16px] shrink-0 border-l border-dotted border-[#888]" />
        <Cell className="w-[541px]" />
        <Cell className="w-[20px] justify-center">
          <svg width="12" height="12" viewBox="0 0 12 12" fill="none"><path d="M1 11c4 0 3-4 5-6s3-2 5-4" stroke="#2e6da4" /></svg>
        </Cell>
        <Cell className="w-[20px] justify-center">
          <svg width="10" height="11" viewBox="0 0 10 11" fill="none"><path d="M3 5V3a2 2 0 0 1 4 0v2" stroke="#777" /><rect x="1" y="5" width="8" height="5" fill="#d6b13a" stroke="#8a7420" strokeWidth=".6" /></svg>
        </Cell>
        <Cell className="w-[89px] pl-[3px]">Default</Cell>
        <Cell className="w-[78px]" />
        <Cell className="w-[130px] pl-[3px]">327783.28622, 32349.76715</Cell>
        <Cell className="w-[20px]" />
        <Cell className="w-[20px]" />
        <Cell className="w-[20px]" />
        <Cell className="w-[20px] justify-center">
          <svg width="11" height="12" viewBox="0 0 11 12" fill="none"><path d="M1 1h8l-1 4 2 6H3L1 5z" stroke="#aaa" /></svg>
        </Cell>
        <Cell className="w-[20px] justify-center">
          <svg width="11" height="10" viewBox="0 0 11 10"><path d="M5.5 0L11 5H9v5H2V5H0z" fill="#e8982e" /><path d="M4 6h3v4H4z" fill="#fff" /></svg>
        </Cell>
        <Cell className="w-[20px]" />
        <Cell className="w-[20px] justify-center">
          <svg width="9" height="12" viewBox="0 0 9 12"><path d="M1 0h7v12H1z" fill="#1f7fd6" /><path d="M0 2h1M0 5h1M0 8h1M8 2h1M8 5h1M8 8h1" stroke="#123a6a" /></svg>
        </Cell>
        <Cell className="w-[20px]" />
        <Cell className="w-[21px] justify-center">
          <svg width="10" height="10" viewBox="0 0 10 10" fill="none"><rect x=".5" y=".5" width="9" height="9" fill="#e0e0e0" stroke="#aaa" /><rect x="3" y="2" width="4" height="5" stroke="#999" /></svg>
        </Cell>
      </div>

      {/* floating tool settings */}
      <div className="absolute left-[637px] top-[194px] w-[80px] h-[32px] flex flex-col">
        <div className="h-[20px] bg-white flex items-center text-[#aaa]">
          <svg className="ml-[4px]" width="12" height="12" viewBox="0 0 12 12" fill="none"><path d="M0 6h4M5 10l3-8 2 1-3 8z" stroke="#555" /><rect x="7" y="6" width="4" height="5" fill="#bbb" /></svg>
          <svg className="ml-[13px]" width="8" height="8" viewBox="0 0 8 8" fill="none"><rect x="1" y="1" width="6" height="6" stroke="#e4e4e4" /></svg>
          <svg className="ml-[22px]" width="8" height="8" viewBox="0 0 8 8" fill="none"><path d="M1 1l6 6M7 1L1 7" stroke="#888" /></svg>
        </div>
        <div className="h-[12px] bg-[#eeeeee]" />
      </div>

      {/* hover tip */}
      <div className="absolute left-[685px] top-[285px] text-[7.6px] leading-[8.3px]">
        <div className="w-[139px] h-[13px] bg-[#dcdce6] border border-[#cfcfdc] flex items-center text-[#3b3ba8] whitespace-nowrap pt-px">
          <div className="w-[13px] h-full border-r border-[#eee] mr-[1px]" />
          Select Regression or Curvature Line
        </div>
        <div className="w-[117px] h-[37px] mt-px bg-[#f4f0d4] text-[#222] pl-[1px] pt-px whitespace-pre">
          <div>Line String: Regression Line</div>
          <div>Feature:  Alignment\Geom_Temp</div>
          <div>No Active Profile</div>
          <div>Level: Geom_Temp</div>
        </div>
      </div>
    </div>
  );
}
